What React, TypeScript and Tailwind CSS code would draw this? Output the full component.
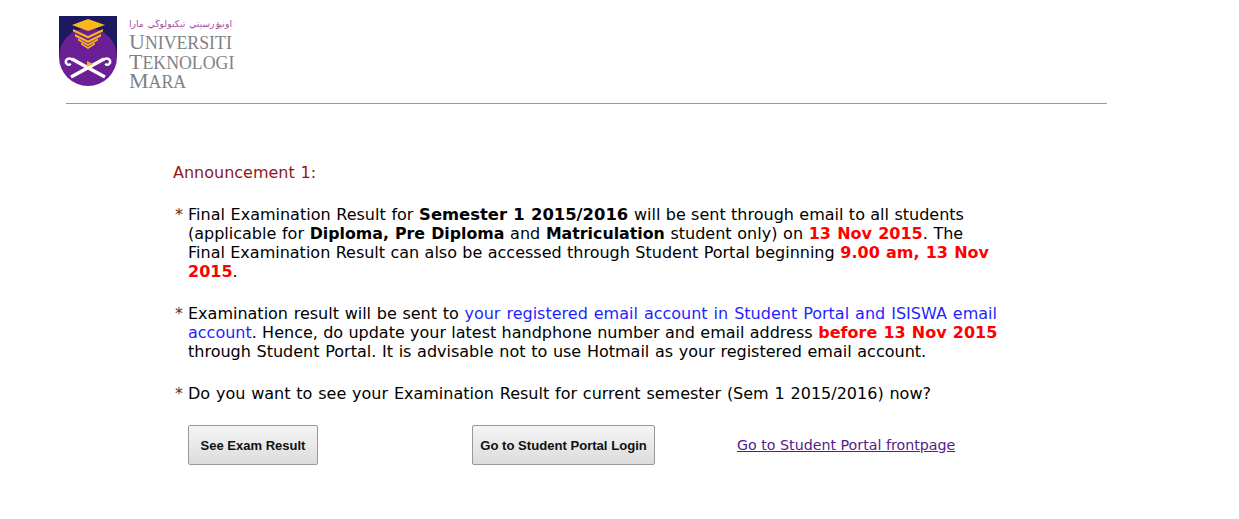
const Logo = () => (
  <div className="flex items-start">
    <svg width="60" height="72" viewBox="0 0 60 72" className="mt-[16px] shrink-0">
      <path d="M0 0H58V41H0Z" fill="#1c1a5e" />
      <circle cx="29" cy="41" r="29" fill="#6a1f94" />
      <path d="M14 13L29 20L44 13L44 15.5L29 22.5L14 15.5Z" fill="#f6b221" />
      <path d="M16 18L29 24.5L42 18L42 20.5L29 27L16 20.5Z" fill="#f6b221" />
      <path d="M19 22.5L29 28L39 22.5L39 24.5L29 30L19 24.5Z" fill="#f6b221" />
      <path d="M22 26.5L29 31L36 26.5L36 28.5L29 33L22 28.5Z" fill="#f6b221" />
      <path d="M29 3L46 9L29 15L13 9Z" fill="#fbb81c" />
      <path d="M13 43L46 61M45 43L12 61" fill="none" stroke="#fff" stroke-width="3.5" />
      <path d="M14 44C10 41 6 43 7 47C8 49 10 49 12 48M44 44C48 41 52 43 51 47C50 49 48 49 46 48" fill="none" stroke="#fff" stroke-width="2.5" />
      <path d="M28 45L34 48L28 51Z" fill="#f6b221" />
    </svg>
    <div className="ml-[10px] flex flex-col">
      <div
        dir="rtl"
        className="mt-[14px] h-[19px] w-[103px] whitespace-nowrap text-center font-['DejaVu_Sans',sans-serif] text-[9.3px] leading-[19px] text-[#a0529c]"
      >
        اونيۏرسيتي تيكنولوڬي مارا
      </div>
      <div className="font-['Liberation_Serif',serif] text-[22px] leading-[17.5px] text-[#808285]">
        <div>U<span className="text-[17.8px]">NIVERSITI</span></div>
        <div>T<span className="text-[17.8px]">EKNOLOGI</span></div>
        <div>M<span className="text-[17.8px]">ARA</span></div>
      </div>
    </div>
  </div>
);

const App = () => {
  return (
    <div className="h-[519px] w-[1239px] overflow-hidden bg-white font-['DejaVu_Sans',sans-serif] text-[16px] leading-[19px] text-black [word-spacing:0.6px]">
      <div className="ml-[59px] h-[103px]">
        <Logo />
      </div>
      <hr className="ml-[66px] w-[1041px] border-t border-[#999]" />

      <div className="ml-[173px] mt-[59px] w-[830px]">
        <p className="text-[#8b1a1a]">Announcement 1:</p>

        <div className="mt-[23px] flex">
          <span className="w-[15px] shrink-0 pl-[2px] text-[#6b1f1f]">*</span>
          <p className="w-[812px]">
            Final Examination Result for <b className="text-[16.4px]">Semester 1 2015/2016</b>{" "}
            <span className="[word-spacing:0.3px]">will be sent through email to all students</span> (applicable for{" "}
            <b className="text-[15.8px]">Diploma, Pre Diploma</b> and <b className="text-[15.8px]">Matriculation</b> student only) on{" "}
            <b className="text-[#ff0000]">13 Nov 2015</b>.{" "}
            <span className="[word-spacing:0.3px]">The Final Examination Result can also be accessed through Student Portal beginning</span>{" "}
            <b className="text-[#ff0000]">9.00 am, 13 Nov 2015</b>.
          </p>
        </div>

        <div className="mt-[23px] flex">
          <span className="w-[15px] shrink-0 pl-[2px] text-[#6b1f1f]">*</span>
          <p className="w-[812px]">
            Examination result will be sent to{" "}
            <span className="text-[#1f1fff] [word-spacing:0.9px]">your registered email account in Student Portal and ISISWA email account</span>
            <span className="[word-spacing:0.2px]">. Hence, do update your latest handphone number and email address</span>{" "}
            <b className="text-[#ff0000]">before 13 Nov 2015</b> through Student Portal. It is advisable not to use
            Hotmail as your registered email account.
          </p>
        </div>

        <div className="mt-[23px] flex">
          <span className="w-[15px] shrink-0 pl-[2px] text-[#6b1f1f]">*</span>
          <p className="[word-spacing:0.75px]">Do you want to see your Examination Result for current semester (Sem 1 2015/2016) now?</p>
        </div>

        <div className="ml-[15px] mt-[22px] flex items-center [word-spacing:0]">
          <button className="h-[40px] w-[130px] rounded-[2px] border border-[#999] bg-gradient-to-b from-[#f5f5f5] to-[#dcdcdc] font-['Liberation_Sans',sans-serif] text-[13px] font-bold text-[#111]">
            See Exam Result
          </button>
          <button className="ml-[154px] h-[40px] w-[183px] rounded-[2px] border border-[#999] bg-gradient-to-b from-[#f5f5f5] to-[#dcdcdc] font-['Liberation_Sans',sans-serif] text-[13.1px] font-bold text-[#111]">
            Go to Student Portal Login
          </button>
          <a href="#" className="ml-[82px] text-[14.22px] text-[#551a8b] underline">
            Go to Student Portal frontpage
          </a>
        </div>
      </div>
    </div>
  );
};

export default App;
